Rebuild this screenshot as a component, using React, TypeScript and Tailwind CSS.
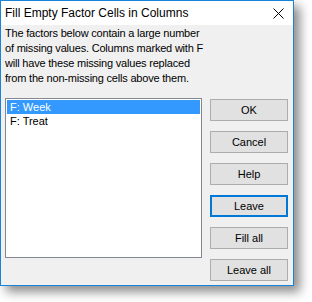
import React, { useState } from 'react';

const items = ['F: Week', 'F: Treat'];
const buttons = ['OK', 'Cancel', 'Help', 'Leave', 'Fill all', 'Leave all'];
const lines = [
  'The factors below contain a large number',
  'of missing values. Columns marked with F',
  'will have these missing values replaced',
  'from the non-missing cells above them.',
];

export default function App() {
  const [selected, setSelected] = useState(0);

  return (
    <div className="w-[312px] h-[302px] bg-white" style={{ fontFamily: '"Liberation Sans", Arial, sans-serif' }}>
      <div className="w-[294px] h-[286px] border border-[#1883d7] bg-[#f0f0f0] flex flex-col shadow-[6px_6px_10px_rgba(0,0,0,0.45)]">
        {/* Title bar */}
        <div className="h-[24px] bg-white flex items-center justify-between pl-[4px] pr-[9px]">
          <span className="text-[12px] text-black leading-none">Fill Empty Factor Cells in Columns</span>
          <svg width="11" height="11" viewBox="0 0 11 11">
            <path d="M0.5 0.5 L10.5 10.5 M10.5 0.5 L0.5 10.5" stroke="#000" strokeWidth="1" />
          </svg>
        </div>

        {/* Body */}
        <div className="flex flex-col px-[4px] pt-[1px]">
          <div className="text-[11px] leading-[15px] text-black tracking-[-0.2px]">
            {lines.map((l) => (
              <div key={l} className="whitespace-nowrap">{l}</div>
            ))}
          </div>

          <div className="flex mt-[12px] gap-[8px]">
            <div className="w-[197px] h-[160px] border border-[#828790] bg-white p-[1px]">
              {items.map((it, i) => (
                <div
                  key={it}
                  onClick={() => setSelected(i)}
                  className={
                    i === selected
                      ? 'h-[14px] leading-[14px] text-[11px] pl-[3px] bg-[#3399ff] text-white'
                      : 'h-[14px] leading-[14px] text-[11px] pl-[3px] text-black'
                  }
                >
                  {it}
                </div>
              ))}
            </div>

            <div className="flex flex-col gap-[10px] pt-[1px]">
              {buttons.map((b) => (
                <button
                  key={b}
                  className={
                    b === 'Leave'
                      ? 'w-[78px] h-[22px] bg-[#e1e1e1] border-2 border-[#0078d7] text-[11px] text-black'
                      : 'w-[78px] h-[22px] bg-[#e1e1e1] border border-[#adadad] text-[11px] text-black'
                  }
                >
                  {b}
                </button>
              ))}
            </div>
          </div>
        </div>
      </div>
    </div>
  );
}
